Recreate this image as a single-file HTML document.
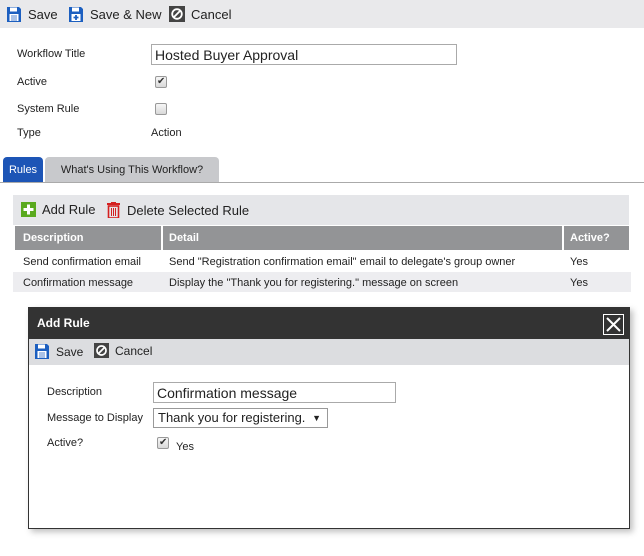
<!DOCTYPE html>
<html><head><style>
*{box-sizing:border-box;margin:0;padding:0}
body{width:644px;height:556px;background:#fff;font-family:"Liberation Sans",Arial,sans-serif;font-size:11px;color:#222;position:relative;overflow:hidden}
.abs{position:absolute}
.tb{left:0;top:0;width:644px;height:28px;background:#e9e9eb}
.btn{position:absolute;font-size:13px;color:#222;display:flex;align-items:center;gap:6px}
.lbl{position:absolute;font-size:11px;color:#222}
input.t{position:absolute;border:1px solid #aaa;font-family:"Liberation Sans",sans-serif;font-size:14px;padding:0 3px;background:#fff;color:#222}
.cb{position:absolute;width:12px;height:12px;border:1px solid #999;border-radius:2px;background:linear-gradient(#f6f6f6,#d8d8d8)}
.cb.on::after{content:"✔";position:absolute;left:1px;top:-1px;font-size:10px;line-height:12px;color:#333}
table{position:absolute;border-collapse:separate;border-spacing:2px 1px}
</style></head><body>
<div class="abs tb"></div>
<div class="btn" style="left:6px;top:6px">
<svg width="16" height="17" viewBox="0 0 16 17"><path d="M1 1h12l2 2v13H1z" fill="#1c5fc0"/><rect x="4" y="1.5" width="7" height="4" fill="#fff"/><rect x="3.5" y="8" width="9" height="7" fill="#fff"/><path d="M5 10h6M5 12h6M5 14h6" stroke="#1c5fc0" stroke-width=".8"/></svg>Save</div>
<div class="btn" style="left:68px;top:6px">
<svg width="16" height="17" viewBox="0 0 16 17"><path d="M1 1h12l2 2v13H1z" fill="#1c5fc0"/><rect x="4" y="1.5" width="7" height="4" fill="#fff"/><rect x="3.5" y="8" width="9" height="7" fill="#fff"/><path d="M8 9v5M5.5 11.5h5" stroke="#1c5fc0" stroke-width="1.8"/></svg>Save &amp; New</div>
<div class="btn" style="left:169px;top:6px">
<svg width="16" height="16" viewBox="0 0 16 16"><rect width="16" height="16" fill="#444"/><circle cx="8" cy="8" r="4.8" fill="none" stroke="#fff" stroke-width="1.8"/><path d="M4.8 11.2L11.2 4.8" stroke="#fff" stroke-width="1.8"/></svg>Cancel</div>

<div class="lbl" style="left:17px;top:48px">Workflow Title</div>
<input class="t" style="left:151px;top:44px;width:306px;height:21px" value="Hosted Buyer Approval">
<div class="lbl" style="left:17px;top:76px">Active</div>
<div class="cb on" style="left:155px;top:76px"></div>
<div class="lbl" style="left:17px;top:103px">System Rule</div>
<div class="cb" style="left:155px;top:103px"></div>
<div class="lbl" style="left:17px;top:127px">Type</div>
<div class="lbl" style="left:151px;top:127px">Action</div>

<div class="abs" style="left:3px;top:157px;width:40px;height:25px;background:#1d55b6;border-radius:4px 4px 0 0;color:#fff;font-size:11px;line-height:27px;text-align:center">Rules</div>
<div class="abs" style="left:45px;top:157px;width:174px;height:25px;background:#c8c9cc;border-radius:4px 4px 0 0;font-size:11px;line-height:27px;text-align:center">What's Using This Workflow?</div>
<div class="abs" style="left:0;top:182px;width:644px;height:1px;background:#aaa"></div>

<div class="abs" style="left:13px;top:195px;width:616px;height:30px;background:#e5e6e9"></div>
<div class="btn" style="left:21px;top:202px">
<svg width="15" height="15" viewBox="0 0 15 15"><rect width="15" height="15" fill="#5aaa1e"/><path d="M7.5 2.5v10M2.5 7.5h10" stroke="#fff" stroke-width="3"/></svg>Add Rule</div>
<div class="btn" style="left:107px;top:202px;gap:7px">
<svg width="13" height="16" viewBox="0 0 13 16"><rect x="0" y="1" width="13" height="2" fill="#d42020"/><rect x="4" y="0" width="5" height="2" fill="#d42020"/><rect x="1.5" y="4" width="10" height="12" fill="none" stroke="#d42020" stroke-width="1.6"/><path d="M4.5 6v8M6.5 6v8M8.5 6v8" stroke="#d42020" stroke-width="1"/></svg>Delete Selected Rule</div>

<div class="abs" style="left:13px;top:272px;width:618px;height:20px;background:#ededf0"></div>
<table style="left:13px;top:225px;width:618px">
<tr style="height:24px;color:#fff;font-weight:bold"><td style="width:146px;padding-left:8px;background:#939496">Description</td><td style="padding-left:6px;background:#939496">Detail</td><td style="width:65px;padding-left:6px;background:#939496">Active?</td></tr>
<tr style="height:21px"><td style="padding-left:8px">Send confirmation email</td><td style="padding-left:6px">Send "Registration confirmation email" email to delegate's group owner</td><td style="padding-left:6px">Yes</td></tr>
<tr style="height:20px"><td style="padding-left:8px">Confirmation message</td><td style="padding-left:6px">Display the "Thank you for registering." message on screen</td><td style="padding-left:6px">Yes</td></tr>
</table>

<div class="abs" style="left:28px;top:307px;width:602px;height:222px;border:1px solid #333;background:#fff;box-shadow:3px 3px 6px rgba(0,0,0,.25)">
<div class="abs" style="left:0;top:0;width:600px;height:31px;background:#333;color:#fff;font-weight:bold;font-size:12px;line-height:31px;padding-left:8px">Add Rule</div>
<div class="abs" style="left:574px;top:6px;width:21px;height:21px;border:1px solid #fff">
<svg width="19" height="19" viewBox="0 0 19 19"><path d="M3 3L16 16M16 3L3 16" stroke="#fff" stroke-width="2"/></svg></div>
<div class="abs" style="left:0;top:31px;width:600px;height:26px;background:#dcdde0"></div>
<div class="btn" style="left:5px;top:35px;font-size:12px">
<svg width="16" height="17" viewBox="0 0 16 17"><path d="M1 1h12l2 2v13H1z" fill="#1c5fc0"/><rect x="4" y="1.5" width="7" height="4" fill="#fff"/><rect x="3.5" y="8" width="9" height="7" fill="#fff"/><path d="M5 10h6M5 12h6M5 14h6" stroke="#1c5fc0" stroke-width=".8"/></svg>Save</div>
<div class="btn" style="left:65px;top:35px;font-size:12px">
<svg width="15" height="15" viewBox="0 0 16 16"><rect width="16" height="16" fill="#444"/><circle cx="8" cy="8" r="4.8" fill="none" stroke="#fff" stroke-width="1.8"/><path d="M4.8 11.2L11.2 4.8" stroke="#fff" stroke-width="1.8"/></svg>Cancel</div>
<div class="lbl" style="left:18px;top:78px">Description</div>
<input class="t" style="left:124px;top:74px;width:243px;height:21px" value="Confirmation message">
<div class="lbl" style="left:18px;top:104px">Message to Display</div>
<div class="abs" style="left:124px;top:100px;width:175px;height:20px;border:1px solid #999;font-size:13px;line-height:18px;padding-left:4px">Thank you for registering.<span style="position:absolute;right:6px;top:0;font-size:9px">▼</span></div>
<div class="lbl" style="left:18px;top:129px">Active?</div>
<div class="cb on" style="left:128px;top:129px"></div>
<div class="lbl" style="left:147px;top:133px">Yes</div>
</div>
</body></html>
